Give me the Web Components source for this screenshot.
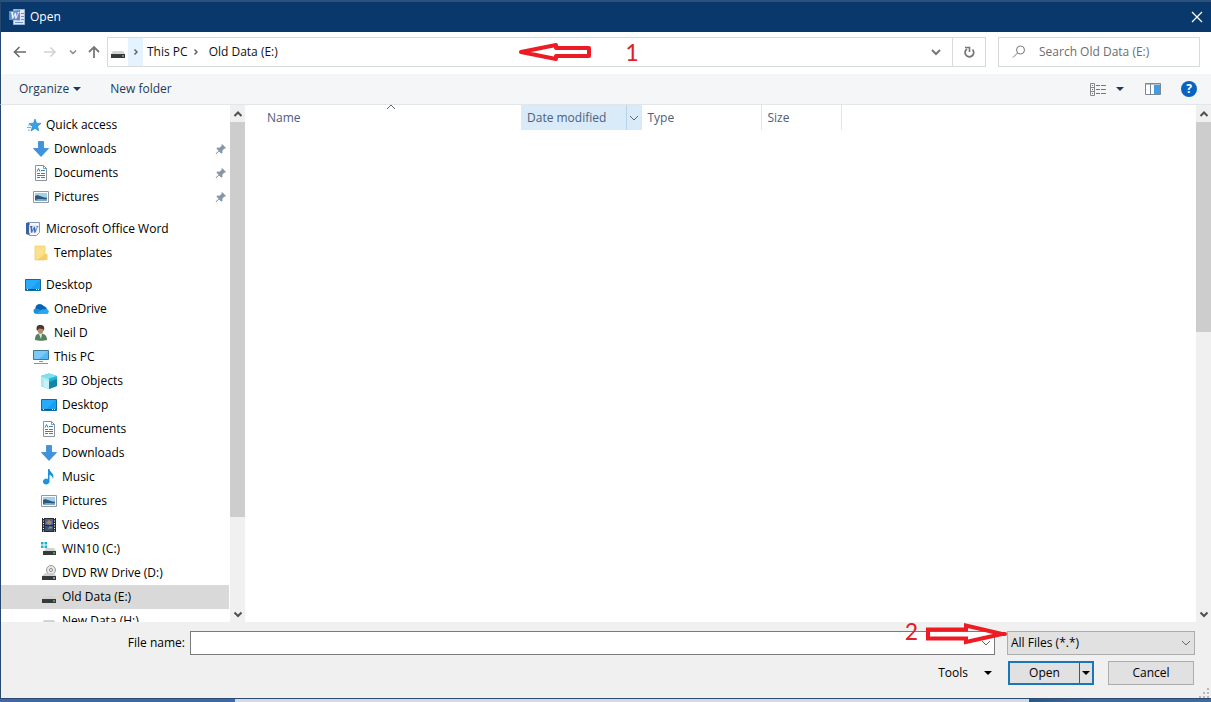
<!DOCTYPE html>
<html lang="en">
<head>
<meta charset="utf-8">
<title>Open</title>
<style>
html, body {
  margin: 0;
  height: 100%;
}
body {
  font: 12px/16px "Segoe UI", "Open Sans", "Noto Sans", sans-serif;
  color: #111;
  background: #d5d9e3;
}
</style>
</head>
<body>
<open-dialog></open-dialog>

<script>
const ICONS = {
  word: `<path d="M4.500.5h11v15h-11z" fill="#dfe8f6" stroke="#9db4d6"/><path d="M12 4.500h3M12 7.500h3M12 10.500h3M6 13.500h8" stroke="#6b90c8"/><path d="M0 2l11-1v10.500L0 11z" fill="#5f8bcc"/><text x="1" y="10" font-size="10" font-weight="bold" font-style="italic" font-family="Liberation Serif, serif" fill="#fff">W</text>`,
  wordDoc: `<path d="M4.500 1.500h10v10l-3 3h-7z" fill="#f4f7fb" stroke="#7f97ba"/><path d="M1 2l3-1v13l-3-1z" fill="#3c62a6"/><path d="M4 4h8v8H4z" fill="#e3ebf8"/><text x="4" y="12" font-size="10" font-weight="bold" font-style="italic" font-family="Liberation Serif, serif" fill="#2b57a3">W</text>`,
  star: `<path d="M10 2l1.600 4.200 4.400.2-3.400 2.900 1.200 4.500L10 11.400 6.100 14l1.200-4.600L4 6.500l4.400-.3z" fill="#35a3e6" stroke="#1e7fc4" stroke-width=".6"/><path d="M3 8h3M2 10.500h4M3 13h2" stroke="#63b7ea"/>`,
  download: `<path d="M5.500.5h5v7h5L8 15.500.5 7.500h5z" fill="#3d93dd" stroke="#2e7fc6" stroke-width=".7"/>`,
  doc: `<path d="M2.500.5h8l3 3v12h-11z" fill="#fff" stroke="#8b949c"/><path d="M10.500.5v3h3" fill="none" stroke="#8b949c"/><path d="M4 6.500l1.500-3L7 6.500M8 5.500h4M4 8.500h3M8 8.500h4M4 10.500h8M4 12.500h3M8 12.500h4" fill="none" stroke="#2f84c4"/>`,
  picture: `<path d="M.5 2.500h15v11H.5z" fill="#fff" stroke="#8d9ba6"/><path d="M2 4h12v8H2z" fill="#9fd0ef"/><path d="M2 7c3-2 5 1 12 2v3H2z" fill="#2e5877"/><path d="M2 11c4-2 8 0 12-1v2H2z" fill="#86aac1"/>`,
  folder: `<path d="M2 1h10v14H2z" fill="#ffe08a" stroke="#ecc55f" stroke-width=".7"/><path d="M12 9h2.500v6H4z" fill="#f3cf6a"/>`,
  desktop: `<path d="M.5 2.500h15v11H.5z" fill="#15a0f5" stroke="#1767a0"/><path d="M1 3h14L5 12H1z" fill="#37b2ff" opacity=".6"/><path d="M1 12.500h14" stroke="#0e4d80"/><path d="M2 12.500h1M11 12.500h1M13 12.500h1" stroke="#fff"/>`,
  cloud: `<path d="M3 13a3 3 0 0 1-.5-5.800A4.500 4.500 0 0 1 10.600 5 4 4 0 0 1 14 8.500 2.400 2.400 0 0 1 13.500 13z" fill="#1490df"/><path d="M2.500 7.200A4.500 4.500 0 0 1 10.600 5L14 8.500 8 9z" fill="#0a62b8"/><path d="M3 13l6-4.500 5-.2A2.400 2.400 0 0 1 13.500 13z" fill="#2aa8ee"/>`,
  user: `<path d="M2 15c0-4 1-6.500 5.500-6.500S14 11 14 15c-3 1-9 1-12 0z" fill="#54815f"/><path d="M6 9h3l-1 5z" fill="#dcefe0"/><ellipse cx="7.500" cy="5" rx="2.800" ry="3.600" fill="#b98a66"/><path d="M4 6C2.500 1 5 0 7.500.1c3.600 0 4.500 2.700 3.200 5.900L10 4 6 3.500z" fill="#4b382c"/>`,
  pc: `<path d="M.5 1.500h15v9H.5z" fill="#55b9f3" stroke="#417798"/><path d="M1 2h14L6 10H1z" fill="#8bd0fa" opacity=".7"/><path d="M6 12.500h4M1 14.500h14" stroke="#8496a3"/>`,
  cube: `<path d="M8 .5L16 3v10l-8 3-8-3V3z" fill="#25b4d0"/><path d="M8 .5L16 3 8 5.500 0 3z" fill="#7be1ee"/><path d="M0 3l8 2.500V16l-8-3z" fill="#a9ebf2"/><path d="M8 9l8-3v7l-8 3z" fill="#1386a8"/><path d="M3 6l5 3v7l-5-2z" fill="#d3f6f8" opacity=".7"/>`,
  music: `<path d="M7 0h1.500c.5 3.500 5.500 4.500 3.500 10-.4-2.500-1.500-3.500-3.500-4v6.500A3.300 3 0 1 1 7 10z" fill="#1d93dc"/>`,
  video: `<path d="M1 1h14v14H1z" fill="#28282d"/><path d="M4 2h8v6H4z" fill="#4d61a0"/><path d="M4 9h8v5H4z" fill="#33517e"/><path d="M5 6l3-3 3 2-2 3zM7 12l2-3 3 2z" fill="#a78c54"/><path d="M2.500 1v14M13.500 1v14" stroke="#fff" stroke-dasharray="1 1.500"/>`,
  drive: `<path d="M3 7h10l2 3H1z" fill="#d2d4d4"/><path d="M1 10h14v4H1z" fill="#353b39"/><path d="M12 12h2" stroke="#7be09c"/>`,
  winDrive: `<path d="M0 1h2.500v2.500H0zM3.500 1H6v2.500H3.500zM0 4.500h2.500V7H0zM3.500 4.500H6V7H3.500z" fill="#20aeca"/><path d="M5 7h8l2 3H3z" fill="#d2d4d4"/><path d="M2 10h13v4H2z" fill="#353b39"/><path d="M12 12h2" stroke="#7be09c"/>`,
  dvd: `<circle cx="10" cy="5" r="4.500" fill="#e8e8e8" stroke="#999"/><circle cx="10" cy="5" r="1.500" fill="#fff" stroke="#888"/><path d="M4 8h9l2 3H1z" fill="#cccece" opacity=".9"/><path d="M1 11h14v4H1z" fill="#353b39"/><path d="M12 13h2" stroke="#ddd"/>`,
  pin: `<path d="M9 3l4 4-1 .7-.6-.2-2 2.300.1 2-1 1L6 10.400 3.200 13.200 2.600 12.600 5.600 9.800 3.400 7.600l1-1 2 .1 2.300-2L8.400 4z" fill="#8797a5"/>`,
  back: `<path d="M14 8H3M7.500 3L2.500 8l5 5" fill="none" stroke="#6a6a6a" stroke-width="1.600"/>`,
  forward: `<path d="M2 8h11M8.500 3.500L13 8l-4.500 4.500" fill="none" stroke="#d2d2d2" stroke-width="1.500"/>`,
  up: `<path d="M8 14V3M3 8l5-5 5 5" fill="none" stroke="#777" stroke-width="1.800"/>`,
  chevDown: `<path d="M4 6l4 4 4-4" fill="none" stroke="#777" stroke-width="2"/>`,
  chevSmall: `<path d="M5 6.500l3 3 3-3" fill="none" stroke="#888" stroke-width="1.500"/>`,
  chevThin: `<path d="M4 6l4 4 4-4" fill="none" stroke="#666"/>`,
  chevUpThin: `<path d="M4 10l4-4 4 4" fill="none" stroke="#666"/>`,
  chevRight: `<path d="M6.500 5.500L9 8l-2.500 2.500" fill="none" stroke="#666" stroke-width="1.500"/>`,
  scrollUp: `<path d="M4.500 10L8 6.500l3.500 3.500" fill="none" stroke="#505050" stroke-width="2"/>`,
  scrollDown: `<path d="M4.500 6.500L8 10l3.500-3.500" fill="none" stroke="#505050" stroke-width="2"/>`,
  triangle: `<path d="M4 6h8l-4 4z" fill="currentColor"/>`,
  refresh: `<path d="M11.500 5.500A4.300 4.300 0 1 1 6 4.900" fill="none" stroke="#777" stroke-width="1.800"/><path d="M4 3.500h4.500V8" fill="none" stroke="#777" stroke-width="1.600"/>`,
  search: `<circle cx="9.500" cy="6" r="4" fill="none" stroke="#777"/><path d="M6.500 9L2 13.500" stroke="#777"/>`,
  close: `<path d="M3 3l10 10M13 3L3 13" stroke="#fff" stroke-width="1.300"/>`,
  view: `<path d="M.5 2.500h4v12h-4zM0 6.500h5M0 10.500h5" fill="none" stroke="#888"/><path d="M2 4.500h1M2 8.500h1M2 12.500h1M6 4.500h4M11 4.500h5M6 8.500h4M11 8.500h5M6 12.500h4M11 12.500h5" stroke="#777"/>`,
  preview: `<path d="M.5 2.500h15v11H.5zM5.500 3v10" fill="#fff" stroke="#7b8894"/><path d="M0 3h16" stroke="#7b8894"/><path d="M9 4h6v9H9z" fill="#3f9de6"/>`,
  grip: `<path d="M12 6h2v2h-2zM12 10h2v2h-2zM8 10h2v2H8zM12 14h2v2h-2zM8 14h2v2H8zM4 14h2v2H4z" fill="#b9b9b9"/>`
};

// clone the markup into an open shadow root
function render(el, html) {
  const tpl = document.createElement('template');
  tpl.innerHTML = html;
  el.attachShadow({ mode: 'open' }).appendChild(tpl.content.cloneNode(true));
}

const buttonReset = `
button {
  font: inherit;
  color: inherit;
  background: none;
  border: 0;
  padding: 0;
  margin: 0;
  display: flex;
  align-items: center;
}`;

class UiIcon extends HTMLElement {
  connectedCallback() {
    render(this, `
      <style>
      :host { display: block; width: 16px; height: 16px; flex: none; }
      svg { display: block; }
      </style>
      <svg width="16" height="16" viewBox="0 0 16 16" aria-hidden="true">${ICONS[this.getAttribute('name')]}</svg>`);
  }
}

class TitleBar extends HTMLElement {
  connectedCallback() {
    render(this, `
      <style>
      :host {
        display: flex;
        align-items: center;
        height: 30px;
        padding: 0 6px 0 8px;
        background: #08386c;
        color: #fff;
        border-top: 2px solid #2c527c;
      }
      ui-icon { margin-right: 5px; }
      h1 { flex: 1; margin: 0; font: inherit; }
      button ui-icon { margin: 0; }
      ${buttonReset}
      </style>
      <ui-icon name="word"></ui-icon>
      <h1><slot></slot></h1>
      <button aria-label="Close"><ui-icon name="close"></ui-icon></button>`);
  }
}

class AddressBar extends HTMLElement {
  connectedCallback() {
    render(this, `
      <style>
      :host {
        display: flex;
        padding: 5px 11px 7px;
        background: #fff;
      }
      ${buttonReset}
      nav { display: flex; align-items: center; width: 95px; flex: none; }
      nav button:nth-child(2) { margin-left: 14px; }
      nav button:nth-child(3) { margin-left: 7px; }
      nav button:nth-child(4) { margin-left: 5px; }
      .path {
        box-sizing: border-box;
        flex: 1;
        display: flex;
        align-items: stretch;
        height: 30px;
        border: 1px solid #d9d9d9;
      }
      .path > ui-icon { margin: 6px 2px; }
      .path button { padding: 0 0 0 4px; }
      .path .root { padding: 0; width: 15px; justify-content: center; background: #e5f3ff; }
      .path .sep { align-self: center; margin: 0 1px 0 0; }
      .space { flex: 1; }
      .path .drop { padding: 0; width: 32px; justify-content: center; }
      .path .refresh { padding: 0; width: 33px; justify-content: center; border-left: 1px solid #d9d9d9; }
      .search {
        box-sizing: border-box;
        display: flex;
        align-items: center;
        width: 202px;
        height: 30px;
        margin-left: 12px;
        padding-left: 12px;
        border: 1px solid #d9d9d9;
      }
      input {
        flex: 1;
        min-width: 0;
        font: inherit;
        border: 0;
        padding: 0 0 0 12px;
        outline: 0;
        background: none;
      }
      input::placeholder { color: #6d6d6d; opacity: 1; }
      </style>
      <nav>
        <button aria-label="Back"><ui-icon name="back"></ui-icon></button>
        <button aria-label="Forward"><ui-icon name="forward"></ui-icon></button>
        <button aria-label="Recent locations"><ui-icon name="chevSmall"></ui-icon></button>
        <button aria-label="Up"><ui-icon name="up"></ui-icon></button>
      </nav>
      <div class="path">
        <ui-icon name="drive"></ui-icon>
        <button class="root" aria-label="Locations"><ui-icon name="chevRight"></ui-icon></button>
        <button>This PC</button>
        <ui-icon class="sep" name="chevRight"></ui-icon>
        <button>Old Data (E:)</button>
        <span class="space"></span>
        <button class="drop" aria-label="Previous locations"><ui-icon name="chevDown"></ui-icon></button>
        <button class="refresh" aria-label="Refresh"><ui-icon name="refresh"></ui-icon></button>
      </div>
      <div class="search">
        <ui-icon name="search"></ui-icon>
        <input type="text" aria-label="Search" placeholder="Search Old Data (E:)">
      </div>`);
  }
}

class CommandBar extends HTMLElement {
  connectedCallback() {
    render(this, `
      <style>
      :host {
        display: flex;
        align-items: center;
        height: 30px;
        padding: 0 14px 0 18px;
        background: #f4f6f8;
        border-bottom: 1px solid #e3e6e9;
        color: #1e395b;
      }
      ${buttonReset}
      .new { margin-left: 25px; }
      .view { margin-left: auto; }
      .view ui-icon + ui-icon { margin-left: 6px; }
      .preview { margin: 0 20px 0 17px; }
      .help {
        width: 16px;
        height: 16px;
        justify-content: center;
        border-radius: 50%;
        background: #0a63c0;
        color: #fff;
        font-weight: bold;
      }
      </style>
      <button>Organize<ui-icon name="triangle"></ui-icon></button>
      <button class="new">New folder</button>
      <button class="view" aria-label="Change your view"><ui-icon name="view"></ui-icon><ui-icon name="triangle"></ui-icon></button>
      <button class="preview" aria-label="Preview pane"><ui-icon name="preview"></ui-icon></button>
      <button class="help">?</button>`);
  }
}

// thumb / rest are the flex shares of the track
class ScrollBar extends HTMLElement {
  connectedCallback() {
    render(this, `
      <style>
      :host {
        display: flex;
        flex-direction: column;
        width: 15px;
        flex: none;
        background: #f0f0f0;
      }
      ${buttonReset}
      button { height: 17px; flex: none; }
      .thumb { flex: ${this.getAttribute('thumb')}; background: #cdcdcd; }
      .rest { flex: ${this.getAttribute('rest')}; }
      </style>
      <button aria-label="Scroll up"><ui-icon name="scrollUp"></ui-icon></button>
      <div class="thumb"></div>
      <div class="rest"></div>
      <button aria-label="Scroll down"><ui-icon name="scrollDown"></ui-icon></button>`);
  }
}

class TreeItem extends HTMLElement {
  connectedCallback() {
    const level = Number(this.getAttribute('level') || 0);
    render(this, `
      <style>
      :host {
        display: flex;
        align-items: center;
        height: 24px;
        flex: none;
        padding: 0 0 0 ${24 + level * 8}px;
      }
      :host([selected]) { background: #d9d9d9; }
      :host([gap]) { margin-top: 8px; }
      a {
        flex: 1;
        display: flex;
        align-items: center;
        gap: 5px;
        color: inherit;
        text-decoration: none;
      }
      </style>
      <a href="#"><ui-icon name="${this.getAttribute('icon')}"></ui-icon><slot></slot></a>
      ${this.hasAttribute('pinned') ? '<ui-icon name="pin"></ui-icon>' : ''}`);
  }
}

class NavTree extends HTMLElement {
  connectedCallback() {
    render(this, `
      <style>
      :host { display: flex; min-height: 0; background: #fff; }
      .items {
        flex: 1;
        display: flex;
        flex-direction: column;
        padding-top: 8px;
        margin-right: 1px;
        overflow: hidden;
        color: #000;
      }
      </style>
      <div class="items"><slot></slot></div>
      <scroll-bar thumb="395" rest="88"></scroll-bar>`);
  }
}

class FileList extends HTMLElement {
  connectedCallback() {
    render(this, `
      <style>
      :host { display: flex; min-height: 0; background: #fff; }
      .list { flex: 1; padding-left: 13px; overflow: hidden; }
      ${buttonReset}
      table { border-collapse: collapse; table-layout: fixed; width: 580px; color: #4c607a; }
      th {
        box-sizing: border-box;
        position: relative;
        height: 25px;
        padding: 0 0 0 6px;
        text-align: left;
        font-weight: normal;
        border-right: 1px solid #e5e5e5;
      }
      .name { width: 260px; border: 0; }
      .date { width: 120px; background: #d9ebf9; }
      .type { width: 120px; }
      .size { width: 80px; }
      .sort { position: absolute; top: -6px; left: 122px; }
      .cell { display: flex; align-items: stretch; justify-content: space-between; height: 25px; line-height: 25px; }
      .cell button { width: 15px; justify-content: center; border-left: 1px solid #b9d3e8; }
      </style>
      <div class="list">
        <table>
          <thead>
            <tr>
              <th class="name">Name<ui-icon class="sort" name="chevUpThin"></ui-icon></th>
              <th class="date"><div class="cell">Date modified<button aria-label="Filter"><ui-icon name="chevThin"></ui-icon></button></div></th>
              <th class="type">Type</th>
              <th class="size">Size</th>
            </tr>
          </thead>
          <tbody></tbody>
        </table>
      </div>
      <scroll-bar thumb="210" rest="273"></scroll-bar>`);
  }
}

class DialogFooter extends HTMLElement {
  connectedCallback() {
    render(this, `
      <style>
      :host {
        display: grid;
        grid-template-columns: 184px 1fr 188px;
        align-content: start;
        row-gap: 6px;
        position: relative;
        height: 67px;
        padding: 9px 16px 0 0;
        background: #f0f0f0;
        color: #000;
      }
      ${buttonReset}
      label { text-align: right; line-height: 24px; }
      .combo {
        box-sizing: border-box;
        display: flex;
        align-items: center;
        height: 24px;
        margin: 0 12px 0 5px;
        border: 1px solid #7a7a7a;
        background: #fff;
      }
      input { flex: 1; min-width: 0; font: inherit; border: 0; outline: 0; padding: 0 4px; background: none; }
      .type { position: relative; height: 24px; }
      select {
        box-sizing: border-box;
        width: 100%;
        height: 24px;
        appearance: none;
        font: inherit;
        color: inherit;
        padding: 0 3px;
        border: 1px solid #adadad;
        border-radius: 0;
        background: #e1e1e1;
      }
      .type ui-icon { position: absolute; right: 1px; top: 4px; pointer-events: none; }
      .actions { grid-column: 1 / -1; display: flex; justify-content: flex-end; height: 24px; }
      .tools { gap: 12px; margin-right: 12px; }
      .split { box-sizing: border-box; display: flex; width: 86px; border: 2px solid #1a76b8; background: #e1e1e1; }
      .split .main { flex: 1; justify-content: center; }
      .split .more { width: 13px; justify-content: center; border-left: 1px solid #555; }
      .cancel {
        box-sizing: border-box;
        width: 86px;
        margin: 0 1px 0 14px;
        justify-content: center;
        border: 1px solid #adadad;
        background: #e1e1e1;
      }
      .grip { position: absolute; right: 0; bottom: 0; }
      </style>
      <label for="file">File name:</label>
      <div class="combo">
        <input id="file" type="text">
        <button aria-label="Recent names"><ui-icon name="chevThin"></ui-icon></button>
      </div>
      <div class="type">
        <select aria-label="File type"><option>All Files (*.*)</option></select>
        <ui-icon name="chevThin"></ui-icon>
      </div>
      <div class="actions">
        <button class="tools">Tools<ui-icon name="triangle"></ui-icon></button>
        <div class="split">
          <button class="main">Open</button>
          <button class="more" aria-label="Open options"><ui-icon name="triangle"></ui-icon></button>
        </div>
        <button class="cancel">Cancel</button>
      </div>
      <ui-icon class="grip" name="grip"></ui-icon>`);
  }
}

// red numbered arrow, drawn over the dialog
class StepMark extends HTMLElement {
  connectedCallback() {
    const left = this.getAttribute('dir') === 'left';
    render(this, `
      <style>
      :host {
        position: absolute;
        display: flex;
        flex-direction: ${left ? 'row' : 'row-reverse'};
        gap: ${left ? 33 : 7}px;
        font: 26px/20px Carlito, Lato, sans-serif;
        color: #e01f26;
        pointer-events: none;
      }
      svg { display: block; }
      path { fill: none; stroke: #ed1c24; stroke-width: 4; }
      </style>
      ${left
        ? '<svg width="73" height="20" viewBox="0 0 73 20"><path stroke-linejoin="round" d="M2 10l35-7v3h33v8H37v3z"/></svg>'
        : '<svg width="83" height="26" viewBox="0 0 83 26"><path d="M3 8.500h38V4.500L77 13l-36 8v-3.500H3z"/><path d="M70 13h10" stroke-linecap="round"/></svg>'}
      <span><slot></slot></span>`);
  }
}

class OpenDialog extends HTMLElement {
  connectedCallback() {
    render(this, `
      <style>
      :host {
        box-sizing: border-box;
        display: grid;
        grid-template-rows: auto auto auto minmax(0, 1fr) auto 4px;
        position: relative;
        height: 100vh;
        min-height: 400px;
      }
      main {
        display: grid;
        grid-template-columns: 244px minmax(0, 1fr);
        column-gap: 3px;
        min-height: 0;
        background: #fff;
      }
      main, address-bar, command-bar, dialog-footer, title-bar { border-left: 1px solid #27486e; }
      .behind {
        border-top: 1px solid #2b4a72;
        background: linear-gradient(90deg, #4267a3 235px, #d5d9e3 235px, #d5d9e3 85%, #2f5580 85%, #41699c 90%);
      }
      .one { left: 519px; top: 42px; }
      .two { right: 203px; bottom: 55px; }
      </style>
      <title-bar>Open</title-bar>
      <address-bar></address-bar>
      <command-bar></command-bar>
      <main>
        <nav-tree>
          <tree-item icon="star">Quick access</tree-item>
          <tree-item icon="download" level="1" pinned>Downloads</tree-item>
          <tree-item icon="doc" level="1" pinned>Documents</tree-item>
          <tree-item icon="picture" level="1" pinned>Pictures</tree-item>
          <tree-item icon="wordDoc" gap>Microsoft Office Word</tree-item>
          <tree-item icon="folder" level="1">Templates</tree-item>
          <tree-item icon="desktop" gap>Desktop</tree-item>
          <tree-item icon="cloud" level="1">OneDrive</tree-item>
          <tree-item icon="user" level="1">Neil D</tree-item>
          <tree-item icon="pc" level="1">This PC</tree-item>
          <tree-item icon="cube" level="2">3D Objects</tree-item>
          <tree-item icon="desktop" level="2">Desktop</tree-item>
          <tree-item icon="doc" level="2">Documents</tree-item>
          <tree-item icon="download" level="2">Downloads</tree-item>
          <tree-item icon="music" level="2">Music</tree-item>
          <tree-item icon="picture" level="2">Pictures</tree-item>
          <tree-item icon="video" level="2">Videos</tree-item>
          <tree-item icon="winDrive" level="2">WIN10 (C:)</tree-item>
          <tree-item icon="dvd" level="2">DVD RW Drive (D:)</tree-item>
          <tree-item icon="drive" level="2" selected>Old Data (E:)</tree-item>
          <tree-item icon="drive" level="2">New Data (H:)</tree-item>
        </nav-tree>
        <file-list></file-list>
      </main>
      <dialog-footer></dialog-footer>
      <div class="behind"></div>
      <step-mark class="one" dir="left">1</step-mark>
      <step-mark class="two" dir="right">2</step-mark>`);
  }
}

customElements.define('ui-icon', UiIcon);
customElements.define('title-bar', TitleBar);
customElements.define('address-bar', AddressBar);
customElements.define('command-bar', CommandBar);
customElements.define('scroll-bar', ScrollBar);
customElements.define('tree-item', TreeItem);
customElements.define('nav-tree', NavTree);
customElements.define('file-list', FileList);
customElements.define('dialog-footer', DialogFooter);
customElements.define('step-mark', StepMark);
customElements.define('open-dialog', OpenDialog);
</script>
</body>
</html>
